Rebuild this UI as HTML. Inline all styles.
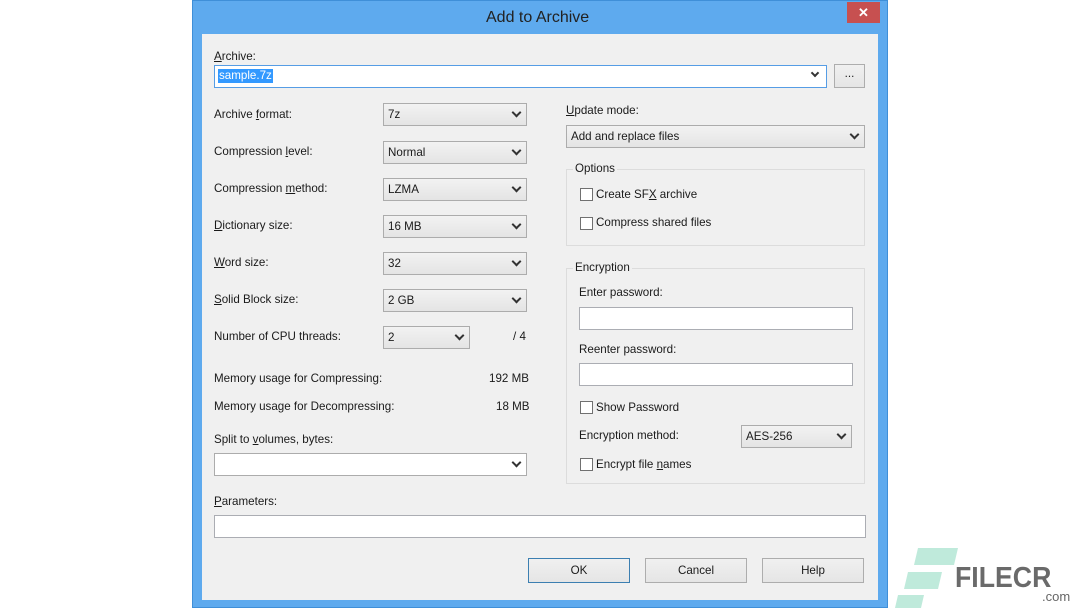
<!DOCTYPE html>
<html><head><meta charset="utf-8"><style>
*{box-sizing:border-box;margin:0;padding:0}
body{width:1080px;height:608px;background:#fff;position:relative;overflow:hidden;font-family:"Liberation Sans",sans-serif;font-size:11.6px;color:#1a1a1a}
.a{position:absolute;white-space:nowrap}
#win{left:192px;top:0;width:696px;height:608px;background:#5eaaee;border:1px solid #3f8fd8}
#cl{left:202px;top:34px;width:676px;height:566px;background:#f0f0f0}
.t{position:absolute;white-space:nowrap;line-height:14px}
.cb{position:absolute;height:23px;border:1px solid #acacac;background:linear-gradient(#f2f2f2,#e4e4e4);padding:4px 0 0 4px;line-height:14px}
.cb:after{content:"";position:absolute;right:6px;top:5px;width:5px;height:5px;border-right:2px solid #333;border-bottom:2px solid #333;transform:rotate(45deg)}
.ed{position:absolute;height:23px;border:1px solid #abadb3;background:#fff}
.grp{position:absolute;border:1px solid #dcdcdc}
.chk{position:absolute;width:13px;height:13px;border:1px solid #707070;background:#fff}
.btn{position:absolute;height:25px;width:102px;border:1px solid #adadad;background:linear-gradient(#f0f0f0,#e5e5e5);text-align:center;line-height:23px}
u{text-decoration:underline}
</style></head><body>
<div id="win" class="a"></div>
<div class="a" style="left:486px;top:9px;font-size:16px;color:#222">Add to Archive</div>
<div class="a" style="left:847px;top:2px;width:33px;height:21px;background:#c75050;color:#fff;text-align:center;font-size:13px;line-height:21px;font-weight:bold">✕</div>
<div id="cl" class="a"></div>

<div class="t" style="left:214px;top:50px"><u>A</u>rchive:</div>
<div class="ed" style="left:214px;top:65px;width:613px;border-color:#569de5"></div>
<div class="a" style="left:218px;top:69px;background:#3399ff;color:#fff;padding:0 1px;line-height:14px">sample.7z</div>
<div class="a" style="left:812px;top:70px;width:6px;height:6px;border-right:2px solid #333;border-bottom:2px solid #333;transform:rotate(45deg)"></div>
<div class="btn" style="left:834px;top:64px;width:31px;height:24px;line-height:18px">...</div>

<div class="t" style="left:214px;top:108px">Archive <u>f</u>ormat:</div>
<div class="cb" style="left:383px;top:103px;width:144px">7z</div>
<div class="t" style="left:214px;top:145px">Compression <u>l</u>evel:</div>
<div class="cb" style="left:383px;top:141px;width:144px">Normal</div>
<div class="t" style="left:214px;top:182px">Compression <u>m</u>ethod:</div>
<div class="cb" style="left:383px;top:178px;width:144px">LZMA</div>
<div class="t" style="left:214px;top:219px"><u>D</u>ictionary size:</div>
<div class="cb" style="left:383px;top:215px;width:144px">16 MB</div>
<div class="t" style="left:214px;top:256px"><u>W</u>ord size:</div>
<div class="cb" style="left:383px;top:252px;width:144px">32</div>
<div class="t" style="left:214px;top:293px"><u>S</u>olid Block size:</div>
<div class="cb" style="left:383px;top:289px;width:144px">2 GB</div>
<div class="t" style="left:214px;top:330px">Number of CPU threads:</div>
<div class="cb" style="left:383px;top:326px;width:87px">2</div>
<div class="t" style="left:513px;top:330px">/ 4</div>
<div class="t" style="left:214px;top:372px">Memory usage for Compressing:</div>
<div class="t" style="left:489px;top:372px">192 MB</div>
<div class="t" style="left:214px;top:400px">Memory usage for Decompressing:</div>
<div class="t" style="left:496px;top:400px">18 MB</div>
<div class="t" style="left:214px;top:433px">Split to <u>v</u>olumes, bytes:</div>
<div class="cb" style="left:214px;top:453px;width:313px;background:#fff"></div>
<div class="t" style="left:214px;top:495px"><u>P</u>arameters:</div>
<div class="ed" style="left:214px;top:515px;width:652px"></div>

<div class="t" style="left:566px;top:104px"><u>U</u>pdate mode:</div>
<div class="cb" style="left:566px;top:125px;width:299px">Add and replace files</div>
<div class="grp" style="left:566px;top:169px;width:299px;height:77px"></div>
<div class="t" style="left:573px;top:162px;background:#f0f0f0;padding:0 2px">Options</div>
<div class="chk" style="left:580px;top:188px"></div>
<div class="t" style="left:596px;top:188px">Create SF<u>X</u> archive</div>
<div class="chk" style="left:580px;top:217px"></div>
<div class="t" style="left:596px;top:216px">Compress shared files</div>
<div class="grp" style="left:566px;top:268px;width:299px;height:216px"></div>
<div class="t" style="left:573px;top:261px;background:#f0f0f0;padding:0 2px">Encryption</div>
<div class="t" style="left:579px;top:286px">Enter password:</div>
<div class="ed" style="left:579px;top:307px;width:274px"></div>
<div class="t" style="left:579px;top:343px">Reenter password:</div>
<div class="ed" style="left:579px;top:363px;width:274px"></div>
<div class="chk" style="left:580px;top:401px"></div>
<div class="t" style="left:596px;top:401px">Show Password</div>
<div class="t" style="left:579px;top:429px">Encryption method:</div>
<div class="cb" style="left:741px;top:425px;width:111px">AES-256</div>
<div class="chk" style="left:580px;top:458px"></div>
<div class="t" style="left:596px;top:458px">Encrypt file <u>n</u>ames</div>

<div class="btn" style="left:528px;top:558px;border-color:#3c7fb1">OK</div>
<div class="btn" style="left:645px;top:558px">Cancel</div>
<div class="btn" style="left:762px;top:558px">Help</div>

<svg class="a" style="left:890px;top:545px" width="70" height="63"><polygon points="28,3 68,3 64,20 24,20" fill="#bfeadb"/><polygon points="18,27 52,27 48,44 14,44" fill="#bfeadb"/><polygon points="8,50 34,50 31,63 5,63" fill="#bfeadb"/></svg>
<div class="a" style="left:955px;top:562px;font-size:29px;font-weight:bold;color:#6a6a6a;line-height:32px;transform:scaleX(0.92);transform-origin:left">FILECR</div>
<div class="a" style="left:1042px;top:589px;font-size:13px;color:#666">.com</div>
</body></html>
